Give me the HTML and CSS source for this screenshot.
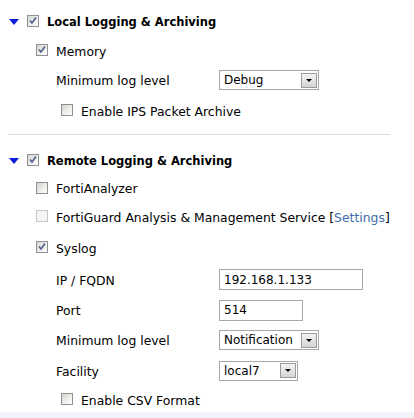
FILE: index.html
```html
<!DOCTYPE html>
<html>
<head>
<meta charset="utf-8">
<link rel="stylesheet" href="styles.css">
</head>
<body>
<div class="page">
  <div class="row h29 lvl0">
    <span class="arrow"></span>
    <span class="cb checked"><svg viewBox="0 0 12 12" width="12" height="12"><path d="M3 5.5 L5 8 L9 2.5" fill="none" stroke="#4a5f8c" stroke-width="1.6"/></svg></span>
    <span class="head">Local Logging &amp; Archiving</span>
  </div>
  <div class="row h30 lvl1">
    <span class="cb checked"><svg viewBox="0 0 12 12" width="12" height="12"><path d="M3 5.5 L5 8 L9 2.5" fill="none" stroke="#4a5f8c" stroke-width="1.6"/></svg></span>
    <span class="txt">Memory</span>
  </div>
  <div class="row h30 lvl1f">
    <span class="label">Minimum log level</span>
    <span class="sel w100"><span class="seltxt">Debug</span><span class="btn"></span></span>
  </div>
  <div class="row h30 lvl2">
    <span class="cb"></span>
    <span class="txt">Enable IPS Packet Archive</span>
  </div>
  <div class="sep"></div>
  <div class="row h27 lvl0">
    <span class="arrow"></span>
    <span class="cb checked"><svg viewBox="0 0 12 12" width="12" height="12"><path d="M3 5.5 L5 8 L9 2.5" fill="none" stroke="#4a5f8c" stroke-width="1.6"/></svg></span>
    <span class="head">Remote Logging &amp; Archiving</span>
  </div>
  <div class="row h29 lvl1">
    <span class="cb"></span>
    <span class="txt">FortiAnalyzer</span>
  </div>
  <div class="row h28 lvl1">
    <span class="cb disabled"></span>
    <span class="txt">FortiGuard Analysis &amp; Management Service [<a class="link">Settings</a>]</span>
  </div>
  <div class="row h34 lvl1">
    <span class="cb checked"><svg viewBox="0 0 12 12" width="12" height="12"><path d="M3 5.5 L5 8 L9 2.5" fill="none" stroke="#4a5f8c" stroke-width="1.6"/></svg></span>
    <span class="txt">Syslog</span>
  </div>
  <div class="row h31 lvl1f">
    <span class="label">IP / FQDN</span>
    <span class="inp w144">192.168.1.133</span>
  </div>
  <div class="row h30 lvl1f">
    <span class="label">Port</span>
    <span class="inp w84">514</span>
  </div>
  <div class="row h30 lvl1f">
    <span class="label">Minimum log level</span>
    <span class="sel w100"><span class="seltxt">Notification</span><span class="btn"></span></span>
  </div>
  <div class="row h31 lvl1f">
    <span class="label">Facility</span>
    <span class="sel w79"><span class="seltxt">local7</span><span class="btn"></span></span>
  </div>
  <div class="row h26 lvl2">
    <span class="cb"></span>
    <span class="txt">Enable CSV Format</span>
  </div>
  <div class="band"></div>
</div>
</body>
</html>
```

FILE: styles.css
```css
html, body {
  margin: 0;
  padding: 0;
  background: #ffffff;
}
.page {
  padding-top: 6px;
  font-family: "DejaVu Sans", Verdana, sans-serif;
  font-size: 12.4px;
  color: #000;
}
.row {
  display: flex;
  align-items: center;
  box-sizing: border-box;
}
.h26 { height: 26px; }
.h27 { height: 27px; }
.h28 { height: 28px; }
.h29 { height: 29px; }
.h30 { height: 30px; }
.h31 { height: 31px; }
.h34 { height: 34px; }
.lvl0 { padding-left: 9px; }
.lvl1 { padding-left: 36px; }
.lvl1f { padding-left: 56px; }
.lvl2 { padding-left: 61px; }
.arrow {
  width: 0;
  height: 0;
  border-left: 5px solid transparent;
  border-right: 5px solid transparent;
  border-top: 6px solid #0b1fd8;
  margin-right: 8px;
  margin-top: 3px;
}
.cb {
  width: 12px;
  height: 12px;
  box-sizing: border-box;
  border: 1px solid #8f9094;
  background: linear-gradient(135deg, #d6d6d0 0%, #eeeeea 55%, #ffffff 100%);
  position: relative;
  flex: none;
  margin-right: 8px;
}
.cb svg {
  position: absolute;
  left: -1px;
  top: -1px;
}
.cb.disabled {
  border-color: #c8c8c8;
  background: #f5f5f5;
}
.txt {
  padding-top: 2px;
}
.head {
  font-weight: bold;
  font-size: 11.5px;
  padding-top: 3px;
}
.label {
  width: 163px;
  flex: none;
  padding-top: 1px;
}
.link {
  color: #3d6ca8;
}
.sel {
  display: flex;
  align-items: center;
  height: 20px;
  box-sizing: border-box;
  border: 1px solid #a8a8a8;
  background: #fff;
  padding-left: 4px;
  padding-right: 1px;
  font-size: 12px;
}
.seltxt {
  flex: 1;
  white-space: nowrap;
}
.btn {
  width: 16px;
  height: 15px;
  box-sizing: border-box;
  border: 1px solid #9a9a9a;
  background: linear-gradient(#f4f4f4, #d4d4d4);
  position: relative;
  flex: none;
}
.btn::after {
  content: "";
  position: absolute;
  left: 4px;
  top: 5px;
  border-left: 3px solid transparent;
  border-right: 3px solid transparent;
  border-top: 3px solid #000;
}
.w100 { width: 100px; }
.w79 { width: 79px; }
.inp {
  display: flex;
  align-items: center;
  height: 21px;
  box-sizing: border-box;
  border: 1px solid #a8a8a8;
  padding-left: 4px;
  font-size: 12px;
}
.w144 { width: 144px; }
.w84 { width: 84px; }
.sep {
  height: 1px;
  background: #dcdcdc;
  margin: 9px 24px 11px 8px;
}
.band {
  height: 10px;
  background: #f1f3f8;
}
```
